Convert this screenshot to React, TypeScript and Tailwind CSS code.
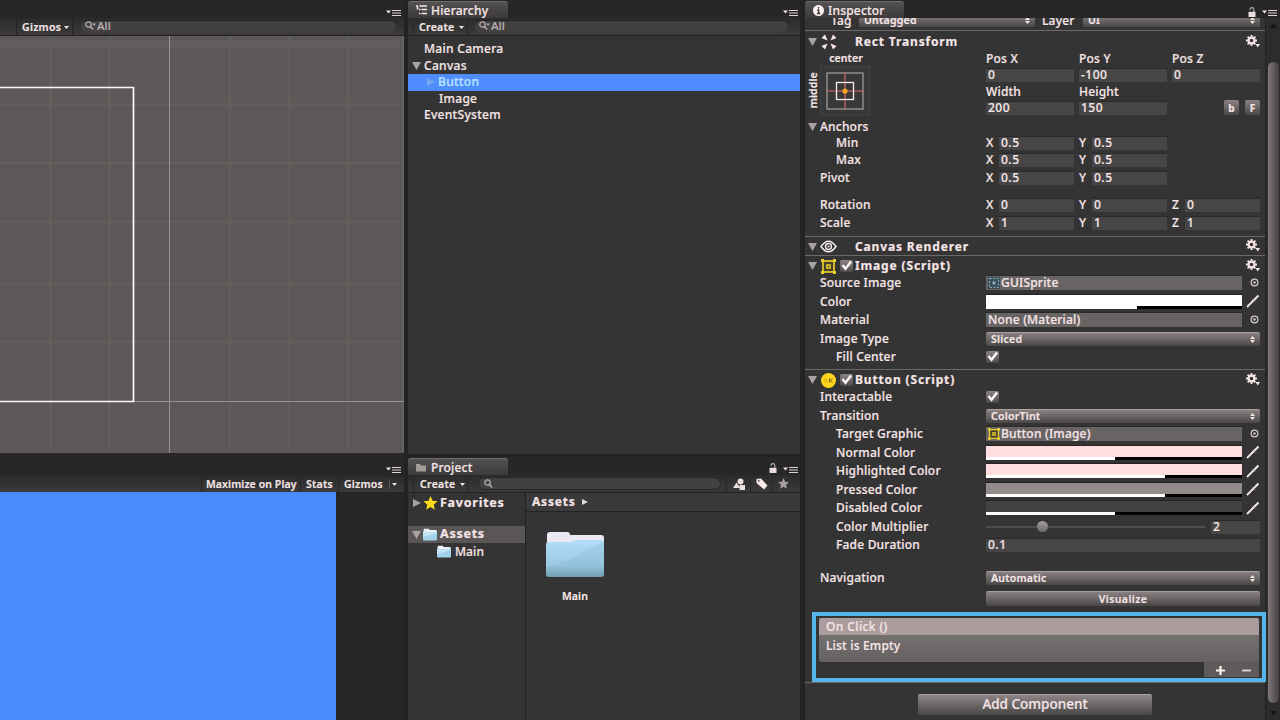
import type { ReactNode } from "react";

function MenuIcon() {
  return (
    <svg width="15" height="8" viewBox="0 0 15 8" className="shrink-0">
      <path d="M0 1.500h5L2.500 4.500z" fill="#f4e6e6" />
      <path d="M6 1.500h9M6 4h9M6 6.500h9" stroke="#e2d3d3" strokeWidth="1.200" />
    </svg>
  );
}

function LockIcon() {
  return (
    <svg width="8" height="10" viewBox="0 0 8 10" className="shrink-0">
      <path d="M2 3V2.500a1.800 1.800 0 0 1 3.800 0V5" fill="none" stroke="#b9adad" strokeWidth="1.100" />
      <path d="M0.500 4.800h7V10h-7z" fill="#eadcdc" />
    </svg>
  );
}

function SearchIcon({ arrow = false }: { arrow?: boolean }) {
  return (
    <svg width="12" height="10" viewBox="0 0 12 10" className="shrink-0">
      <circle cx="3.500" cy="3.500" r="2.700" fill="none" stroke="#b5aaaa" strokeWidth="1.300" />
      <path d="M5.500 5.500L8 8.500" stroke="#b5aaaa" strokeWidth="1.600" />
      {arrow && <path d="M7 2.500h4L9 5z" fill="#b5aaaa" />}
    </svg>
  );
}

function Down() {
  return (
    <svg width="5" height="3" viewBox="0 0 5 3" className="shrink-0">
      <path d="M0 0h5L2.500 3z" fill="#f4e6e6" />
    </svg>
  );
}

function Fold({ closed = false, color = "#a9a2a2" }: { closed?: boolean; color?: string }) {
  return (
    <svg width="9" height="8" viewBox="0 0 9 8" className="shrink-0">
      <path d={closed ? "M1 0L9 4L1 8z" : "M0 0h9L4.500 8z"} fill={color} />
    </svg>
  );
}

function GearIcon() {
  return (
    <svg width="14" height="13" viewBox="0 0 14 13" className="shrink-0">
      <path
        d="M5.500 0V11M0 5.500H11M1.600 1.600L9.400 9.400M9.400 1.600L1.600 9.400"
        stroke="#f6e4e6"
        strokeWidth="1.900"
      />
      <circle cx="5.500" cy="5.500" r="2.900" fill="#353434" stroke="#f6e4e6" strokeWidth="2.200" />
      <path d="M9.500 9h4.500l-2.200 3.500z" fill="#f6e4e6" />
    </svg>
  );
}

function PickerIcon() {
  return (
    <svg width="9" height="9" viewBox="0 0 9 9" className="shrink-0">
      <circle cx="4.500" cy="4.500" r="3.400" fill="none" stroke="#d9cccc" strokeWidth="1.200" />
      <circle cx="4.500" cy="4.500" r="1.200" fill="#d9cccc" />
    </svg>
  );
}

function DropperIcon() {
  return (
    <svg width="14" height="14" viewBox="0 0 14 14" className="shrink-0">
      <path d="M1 13L7.500 6.500" stroke="#f3e9e9" strokeWidth="1.800" />
      <path d="M7 7L12.500 1.500" stroke="#f3e9e9" strokeWidth="2" />
      <path d="M6.500 5L9 7.500" stroke="#b4aaaa" strokeWidth="1" />
    </svg>
  );
}

function FolderIcon() {
  return (
    <svg width="14" height="13" viewBox="0 0 14 13" className="shrink-0">
      <path d="M0.500 3V2q0-1.200 1-1.200h4q1 0 1 1.200h6.500q0.700 0 0.700 1v4H0.500z" fill="#e9f1f6" />
      <path d="M0 4h14v7.500q0 1-1 1H1q-1 0-1-1z" fill="#a3d3ec" />
      <path d="M0 9l14-4v-1H0z" fill="#c0e4f6" />
    </svg>
  );
}

function BigFolderIcon() {
  return (
    <svg width="58" height="46" viewBox="0 0 58 46">
      <defs>
        <linearGradient id="folder" x1="0" y1="0" x2="0" y2="1">
          <stop offset="0" stopColor="#b3ddf8" />
          <stop offset="0.700" stopColor="#9bc8e0" />
          <stop offset="1" stopColor="#6f98aa" />
        </linearGradient>
      </defs>
      <path d="M1 20V4q0-3 3-3h17q3 0 3 3h31q3 0 3 3v14z" fill="#ece9f4" />
      <path d="M0 13q0-2 2-2h23l5-2h26q2 0 2 2v32q0 3-3 3H3q-3 0-3-3z" fill="url(#folder)" />
      <path d="M0 36Q20 33 42 18l16-7v32q0 3-3 3H3q-3 0-3-3z" fill="#7fb0cb" opacity="0.250" />
    </svg>
  );
}

function SpriteIcon({ color, size = 15 }: { color: string; size?: number }) {
  return (
    <svg width={size} height={size} viewBox="0 0 15 15" className="shrink-0">
      <rect x="2" y="2" width="11" height="11" fill="#45412b" stroke={color} strokeWidth="1.700" />
      <path d="M0 0h3v3H0zM12 0H15v3h-3zM0 12h3V15H0zM12 12H15V15h-3z" fill={color} />
      <rect x="5.200" y="5.200" width="4.600" height="4.600" fill={color} />
      <rect x="6.800" y="6.800" width="1.500" height="1.500" fill="#333" />
    </svg>
  );
}

function SmallSpriteIcon() {
  return (
    <svg width="12" height="12" viewBox="0 0 12 12" className="shrink-0">
      <rect width="12" height="12" fill="#3f4d55" />
      <rect x="1.500" y="1.500" width="9" height="9" fill="none" stroke="#7fb2c9" strokeDasharray="2 1.500" />
      <rect x="4.500" y="4.500" width="3" height="3" fill="#7fb2c9" />
    </svg>
  );
}

function Check() {
  return (
    <span className="flex h-[12px] w-[13px] shrink-0 items-center justify-center rounded-[2px] bg-linear-to-b from-[#8d8484] to-[#4d4949]">
      <svg width="13" height="12" viewBox="0 0 13 12">
        <path d="M2.500 5L5.500 8.800L11 1.500" fill="none" stroke="#fff6f6" strokeWidth="2.400" />
      </svg>
    </span>
  );
}

function Tab({ icon, title, className }: { icon: ReactNode; title: string; className: string }) {
  return (
    <div
      className={`flex items-center rounded-t-[3px] border-t border-[#716c6c] bg-linear-to-b from-[#545151] to-[#3c3a3a] ${className}`}
    >
      {icon}
      <span className="text-[12px] tracking-[0.2px]">{title}</span>
    </div>
  );
}

function Field({ value, className = "" }: { value: string; className?: string }) {
  return (
    <div
      className={`flex h-[14px] items-center border-t border-[#2a2a2a] bg-[#474646] pb-[1px] pl-[2px] tracking-[0.5px] ${className}`}
    >
      {value}
    </div>
  );
}

function Dropdown({ value, className = "" }: { value: string; className?: string }) {
  return (
    <div
      className={`flex h-[14px] items-center justify-between rounded-[2px] border-t border-[#aaa0a0] bg-linear-to-b from-[#8a8181] to-[#4a4747] pr-[5px] pl-[5px] text-[10.5px] font-semibold tracking-[0.25px] ${className}`}
    >
      {value}
      <svg width="5" height="7" viewBox="0 0 5 7">
        <path d="M0 3L2.500 0L5 3zM0 4h5L2.500 7z" fill="#f6e6e6" />
      </svg>
    </div>
  );
}

function LabelCell({ indent = false, children }: { indent?: boolean; children: ReactNode }) {
  return <span className={indent ? "w-[181px] pl-[31px]" : "w-[181px] pl-[15px]"}>{children}</span>;
}

function Row({ label, indent = false, children }: { label: string; indent?: boolean; children?: ReactNode }) {
  return (
    <div className="flex h-[18.5px] shrink-0 items-center">
      <LabelCell indent={indent}>{label}</LabelCell>
      {children}
    </div>
  );
}

function ColorBar({ color, alpha }: { color: string; alpha: number }) {
  return (
    <>
      <div className="mb-[1px] h-[15px] w-[256px] border-t border-[#222]">
        <div className="h-[11px]" style={{ backgroundColor: color }} />
        <div className="h-[3px] bg-black">
          <div className="h-full bg-white" style={{ width: alpha }} />
        </div>
      </div>
      <div className="mb-[1px] ml-[4px] flex">
        <DropperIcon />
      </div>
    </>
  );
}

function ObjectField({ value, icon }: { value: string; icon?: ReactNode }) {
  return (
    <>
      <div className="mb-[1px] flex h-[15px] w-[256px] items-center gap-[1px] border-t border-[#2a2a2a] bg-[#696464] pl-[2px]">
        {icon}
        {value}
      </div>
      <div className="mb-[1px] ml-[8px] flex">
        <PickerIcon />
      </div>
    </>
  );
}

function ComponentHeader({
  title,
  icon,
  checked = false,
  className,
}: {
  title: string;
  icon: ReactNode;
  checked?: boolean;
  className: string;
}) {
  return (
    <div className={`flex shrink-0 items-center pl-[3px] ${className}`}>
      <Fold />
      <span className="ml-[3px] flex w-[17px] justify-center">{icon}</span>
      <span className="ml-[3px] flex w-[15px]">{checked && <Check />}</span>
      <span className="grow text-[12px] font-bold tracking-[0.85px]">{title}</span>
      <span className="mr-[5px] mb-[2px]">
        <GearIcon />
      </span>
    </div>
  );
}

function Vector({ label, values, className }: { label: ReactNode; values: string[]; className: string }) {
  return (
    <div className={`flex shrink-0 items-center ${className}`}>
      {label}
      {values.map((value, i) => (
        <div key={i} className="flex w-[93px] items-center">
          <span className="w-[13px]">{"XYZ"[i]}</span>
          <Field value={value} className="w-[75px]" />
        </div>
      ))}
    </div>
  );
}

function SceneView() {
  return (
    <div className="flex h-[453px] flex-col">
      <div className="flex h-[18px] justify-end bg-[#272727] pt-[9px] pr-[3px]">
        <MenuIcon />
      </div>
      <div className="flex h-[18px] items-center border-b border-[#222] bg-linear-to-b from-[#2b2b2b] to-[#3b3a3a]">
        <div className="ml-[16px] flex h-full w-[57px] items-center justify-between border-x border-[#252525] pt-[1px] pr-[3px] pl-[5px] text-[10.5px] font-semibold tracking-[0.3px]">
          Gizmos <Down />
        </div>
        <div className="ml-[8px] flex h-[13px] w-[315px] items-center rounded-full border-t border-[#242424] bg-[#424141] pb-[2px] pl-[4px] text-[11.5px] text-[#b9aeae]">
          <SearchIcon arrow /> All
        </div>
      </div>
      <svg width="404" height="417" viewBox="0 36 404 417" className="bg-[#5d5857]">
        <g stroke="#62605e" strokeWidth="2.500">
          <path d="M50.500 36V448M109.500 36V448M230 36V448M289.500 36V448M348.500 36V448" />
          <path d="M0 105H400M0 163H400M0 222H400M0 284H400M0 342H400" />
        </g>
        <path d="M0 44H400" stroke="#625e5d" strokeWidth="7" />
        <path d="M403 36V453" stroke="#686363" strokeWidth="2" />
        <path d="M169.500 36V453M0 401.500H404" stroke="#989292" />
        <path d="M-2 87.500H133.500V401.500H-2" fill="none" stroke="#fff8f8" strokeWidth="1.700" />
      </svg>
    </div>
  );
}

function GameView() {
  return (
    <div className="flex grow flex-col">
      <div className="flex h-[23px] justify-end bg-[#272727] pt-[13px] pr-[3px]">
        <MenuIcon />
      </div>
      <div className="flex h-[16px] items-center justify-end bg-linear-to-b from-[#2b2b2b] to-[#3b3a3a] text-[10.5px] font-semibold tracking-[0.25px]">
        <span className="flex h-full w-[99px] items-center border-l border-[#252525] pl-[4px] tracking-[0.1px] whitespace-nowrap">
          Maximize on Play
        </span>
        <span className="flex h-full w-[38px] items-center border-l border-[#252525] pl-[5px]">Stats</span>
        <span className="flex h-full w-[60px] items-center border-l border-[#252525] pl-[5px]">
          Gizmos
          <span className="ml-[6px] flex h-[10px] items-center border-l border-[#595454] pl-[2px]">
            <Down />
          </span>
        </span>
        <span className="w-[6px]" />
      </div>
      <div className="grow bg-[#262626]">
        <div className="h-[228px] w-[336px] bg-[#498bff]" />
      </div>
    </div>
  );
}

function Hierarchy() {
  return (
    <div className="flex h-[454px] flex-col">
      <div className="flex h-[18px] items-end justify-between bg-[#272727]">
        <Tab
          className="h-[17px] w-[100px] gap-[4px] pt-[2px] pl-[8px]"
          title="Hierarchy"
          icon={
            <svg width="11" height="10" viewBox="0 0 11 10" className="mb-[2px]">
              <path
                d="M0 1h2M3.500 1H11M3 4.500h1.500M5.500 4.500H11M3 8.500h1.500M5.500 8.500H11M1.500 1v3.500"
                fill="none"
                stroke="#f6e6e6"
                strokeWidth="1.500"
              />
            </svg>
          }
        />
        <span className="mr-[2px] mb-[1px]">
          <MenuIcon />
        </span>
      </div>
      <div className="flex h-[18px] shrink-0 items-center border-b border-[#222] bg-linear-to-b from-[#2b2b2b] to-[#3b3a3a]">
        <div className="ml-[5px] flex h-full w-[55px] items-center justify-between border-x border-[#272727] pt-[1px] pr-[3px] pl-[5px] text-[10.5px] font-semibold tracking-[0.3px]">
          Create <Down />
        </div>
        <div className="ml-[7px] flex h-[13px] w-[313px] items-center rounded-full border-t border-[#242424] bg-[#424141] pb-[2px] pl-[4px] text-[11.5px] text-[#b9aeae]">
          <SearchIcon arrow /> All
        </div>
      </div>
      <div className="flex grow flex-col bg-[#353434] pt-[5px] tracking-[0.3px]">
        <div className="flex h-[16.5px] items-center pl-[16px]">Main Camera</div>
        <div className="flex h-[16.5px] items-center gap-[3px] pl-[4px]">
          <Fold /> Canvas
        </div>
        <div className="flex h-[16.5px] items-center gap-[3px] bg-[#4f8dff] pl-[18px] text-[#b8e4ff]">
          <Fold closed color="#74a9ef" /> Button
        </div>
        <div className="flex h-[16.5px] items-center pl-[31px]">Image</div>
        <div className="flex h-[16.5px] items-center pl-[16px]">EventSystem</div>
      </div>
    </div>
  );
}

function Project() {
  return (
    <div className="flex grow flex-col">
      <div className="flex h-[18px] items-end bg-[#272727]">
        <Tab
          className="mr-auto h-[17px] w-[100px] gap-[5px] pt-[2px] pl-[8px]"
          title="Project"
          icon={
            <svg width="10" height="9" viewBox="0 0 10 9" className="mb-[2px]">
              <path d="M0 1h4l1 1.500h5V8.500H0z" fill="#a49b9b" />
            </svg>
          }
        />
        <span className="mb-[2px]">
          <LockIcon />
        </span>
        <span className="mr-[2px] mb-[1px] ml-[6px]">
          <MenuIcon />
        </span>
      </div>
      <div className="flex h-[18px] shrink-0 items-center border-b border-[#222] bg-linear-to-b from-[#2b2b2b] to-[#3b3a3a]">
        <div className="ml-[5px] flex h-full w-[55px] items-center justify-between border-x border-[#272727] pt-[1px] pr-[2px] pl-[6px] text-[10.5px] font-semibold tracking-[0.3px]">
          Create <Down />
        </div>
        <div className="ml-[10px] flex h-[13px] w-[243px] items-center rounded-full border border-[#272727] bg-[#424141] pl-[5px]">
          <SearchIcon />
        </div>
        <div className="ml-[5px] flex h-full w-[24px] items-center justify-center border-l border-[#272727]">
          <svg width="12" height="12" viewBox="0 0 12 12">
            <circle cx="7.500" cy="3.500" r="3" fill="#f0e1e1" />
            <path d="M0 10L3.500 4.500L7 10zM6.500 7H12v5H6.500z" fill="#f0e1e1" />
          </svg>
        </div>
        <div className="flex h-full w-[22px] items-center justify-center border-l border-[#272727]">
          <svg width="12" height="12" viewBox="0 0 12 12">
            <path d="M0.500 1L5 0.500L11.500 7.500L8 11.500L0.500 5z" fill="#fbe8ea" />
            <circle cx="2.800" cy="2.800" r="0.900" fill="#444" />
          </svg>
        </div>
        <div className="flex h-full w-[21px] items-center justify-center border-l border-[#272727]">
          <svg width="11" height="11" viewBox="0 0 24 24">
            <path
              d="M12 0l3.500 8.200 8.500.8-6.500 5.800 2 8.700-7.500-4.600-7.500 4.600 2-8.700L0 9l8.500-.8z"
              fill="#a89f9f"
            />
          </svg>
        </div>
      </div>
      <div className="flex grow">
        <div className="w-[118px] border-r border-[#222] bg-[#353434]">
          <div className="flex h-[20px] items-center pl-[4px] text-[12.5px] font-bold tracking-[0.75px]">
            <Fold closed />
            <svg width="15" height="14" viewBox="0 0 24 24" className="mr-[2px] ml-[2px]">
              <path
                d="M12 0l3.500 8.200 8.500.8-6.500 5.800 2 8.700-7.500-4.600-7.500 4.600 2-8.700L0 9l8.500-.8z"
                fill="#ffd91c"
              />
            </svg>
            Favorites
          </div>
          <div className="mt-[13px] flex h-[17px] items-center bg-[#5a5656] pl-[4px] text-[12.5px] font-bold tracking-[0.75px]">
            <Fold />
            <span className="mr-[3px] ml-[2px]">
              <FolderIcon />
            </span>
            Assets
          </div>
          <div className="flex h-[17px] items-center gap-[4px] pl-[29px] tracking-[0.1px]">
            <FolderIcon /> Main
          </div>
        </div>
        <div className="flex grow flex-col bg-[#353434]">
          <div className="flex h-[19px] items-center border-b border-[#222] bg-[#3b3a3a] pl-[6px] text-[12px] font-bold tracking-[0.8px]">
            Assets
            <svg width="6" height="6" viewBox="0 0 6 6" className="ml-[6px]">
              <path d="M0 0L6 3L0 6z" fill="#e5d6d6" />
            </svg>
          </div>
          <div className="mt-[19px] ml-[20px] flex w-[58px] flex-col items-center">
            <BigFolderIcon />
            <span className="mt-[14px] text-[10.5px] font-semibold tracking-[0.1px]">Main</span>
          </div>
        </div>
      </div>
    </div>
  );
}

function RectTransform() {
  return (
    <>
      <ComponentHeader
        className="h-[20px]"
        title="Rect Transform"
        icon={
          <svg width="16" height="16" viewBox="0 0 16 16">
            <path
              d="M0.500 4L4 0.500L6.500 6.500zM15.500 4L12 0.500L9.500 6.500zM0.500 12L4 15.500L6.500 9.500zM15.500 12L12 15.500L9.500 9.500z"
              fill="#f8e8e8"
            />
          </svg>
        }
      />
      <div className="flex h-[66px] shrink-0">
        <div className="flex w-[15px] items-center justify-center pt-[10px]">
          <span className="-rotate-90 text-[10.5px] font-semibold tracking-[0.1px]">middle</span>
        </div>
        <div className="flex w-[166px] flex-col">
          <span className="h-[14px] w-[50px] pl-[2px] text-center text-[10.5px] leading-[12px] font-semibold tracking-[0.1px]">
            center
          </span>
          <div className="flex h-[50px] w-[50px] items-center justify-center border border-[#424141] bg-[#393838]">
            <svg width="38" height="38" viewBox="0 0 38 38">
              <rect x="1" y="1" width="36" height="36" fill="none" stroke="#a9a1a1" strokeWidth="1.200" />
              <path d="M19 1V37M1 19H37" stroke="#d96a6a" strokeWidth="1.200" />
              <rect x="10.500" y="10.500" width="17" height="17" fill="none" stroke="#f6eaea" strokeWidth="1.300" />
              <circle cx="19" cy="19" r="2.600" fill="#f5a31c" />
            </svg>
          </div>
        </div>
        <div className="flex w-[93px] flex-col">
          <span className="h-[16px] leading-[14px]">Pos X</span>
          <Field value="0" className="w-[88px]" />
          <span className="h-[19px] leading-[19px]">Width</span>
          <Field value="200" className="w-[88px]" />
        </div>
        <div className="flex w-[93px] flex-col">
          <span className="h-[16px] leading-[14px]">Pos Y</span>
          <Field value="-100" className="w-[88px]" />
          <span className="h-[19px] leading-[19px]">Height</span>
          <Field value="150" className="w-[88px]" />
        </div>
        <div className="flex w-[88px] flex-col">
          <span className="h-[16px] leading-[14px]">Pos Z</span>
          <Field value="0" className="w-[88px]" />
          <div className="mt-[18px] flex justify-end gap-[6px] text-[10px] font-bold">
            <span className="flex h-[15px] w-[15px] items-center justify-center rounded-[2px] bg-linear-to-b from-[#8d8484] to-[#4a4747]">
              b
            </span>
            <span className="flex h-[15px] w-[15px] items-center justify-center rounded-[2px] bg-linear-to-b from-[#8d8484] to-[#4a4747]">
              F
            </span>
          </div>
        </div>
      </div>
      <div className="flex h-[17px] shrink-0 items-center gap-[3px] pl-[3px]">
        <Fold /> Anchors
      </div>
      <Vector className="h-[16px]" label={<LabelCell indent>Min</LabelCell>} values={["0.5", "0.5"]} />
      <Vector className="h-[17px]" label={<LabelCell indent>Max</LabelCell>} values={["0.5", "0.5"]} />
      <Vector className="h-[19px]" label={<LabelCell>Pivot</LabelCell>} values={["0.5", "0.5"]} />
      <Vector className="mt-[8px] h-[19px]" label={<LabelCell>Rotation</LabelCell>} values={["0", "0", "0"]} />
      <Vector className="mb-[4px] h-[18px]" label={<LabelCell>Scale</LabelCell>} values={["1", "1", "1"]} />
    </>
  );
}

function Inspector() {
  return (
    <div className="flex w-[475px] flex-col bg-[#353434]">
      <div className="flex h-[18px] shrink-0 items-end bg-[#272727]">
        <Tab
          className="mr-auto h-[17px] w-[99px] gap-[4px] pt-[2px] pl-[8px]"
          title="Inspector"
          icon={
            <svg width="11" height="11" viewBox="0 0 11 11" className="mb-[2px]">
              <circle cx="5.500" cy="5.500" r="5.500" fill="#fff2f2" />
              <path d="M5.500 2v1.600M4.200 5h1.500v3.500M4 8.500h3.200" fill="none" stroke="#333" strokeWidth="1.300" />
            </svg>
          }
        />
        <span className="mb-[1px]">
          <LockIcon />
        </span>
        <span className="mr-[3px] mb-[1px] ml-[6px]">
          <MenuIcon />
        </span>
      </div>
      <div className="flex h-[702px]">
        <div className="flex w-[461px] flex-col border-r border-[#222] tracking-[0.2px]">
          {/* Scrolled under the tab bar */}
          <div className="flex h-[13px] shrink-0 items-end overflow-hidden border-b border-[#6d6868] pb-[3px]">
            <span className="ml-[26px] w-[28px]">Tag</span>
            <Dropdown value="Untagged" className="w-[176px]" />
            <span className="ml-[7px] w-[41px]">Layer</span>
            <Dropdown value="UI" className="w-[177px]" />
          </div>
          <div className="h-[1px] shrink-0" />
          <RectTransform />

          <div className="h-[1px] shrink-0 bg-[#6d6868]" />
          <ComponentHeader
            className="h-[18px] pt-[1px]"
            title="Canvas Renderer"
            icon={
              <svg width="17" height="13" viewBox="0 0 17 13" className="shrink-0">
                <path d="M1 6.500Q8.500-4 16 6.500Q8.500 17 1 6.500z" fill="none" stroke="#f6eaea" strokeWidth="1.500" />
                <circle cx="8.500" cy="6.500" r="3" fill="none" stroke="#f6eaea" strokeWidth="1.400" />
                <circle cx="8.500" cy="6.500" r="1" fill="#f6eaea" />
              </svg>
            }
          />

          <div className="h-[1px] shrink-0 bg-[#6d6868]" />
          <ComponentHeader
            className="h-[18px] pt-[2px]"
            title="Image (Script)"
            checked
            icon={<SpriteIcon color="#e8cf2c" />}
          />
          <Row label="Source Image">
            <ObjectField value="GUISprite" icon={<SmallSpriteIcon />} />
          </Row>
          <Row label="Color">
            <ColorBar color="#ffffff" alpha={151} />
          </Row>
          <Row label="Material">
            <ObjectField value="None (Material)" />
          </Row>
          <Row label="Image Type">
            <Dropdown value="Sliced" className="w-[274px]" />
          </Row>
          <Row label="Fill Center" indent>
            <Check />
          </Row>

          <div className="mt-[2.5px] h-[1px] shrink-0 bg-[#6d6868]" />
          <ComponentHeader
            className="h-[18px] pt-[2px]"
            title="Button (Script)"
            checked
            icon={
              <svg width="15" height="15" viewBox="0 0 15 15" className="shrink-0">
                <circle cx="7.500" cy="7.500" r="7.500" fill="#ffd51d" />
                <circle cx="4.500" cy="7.500" r="1.600" fill="none" stroke="#cda613" strokeWidth="0.900" />
                <path d="M8.500 5.500v4M11.500 5.500L9 7.500l2.500 2" fill="none" stroke="#7d6510" strokeWidth="1" />
              </svg>
            }
          />
          <Row label="Interactable">
            <Check />
          </Row>
          <Row label="Transition">
            <Dropdown value="ColorTint" className="w-[274px]" />
          </Row>
          <Row label="Target Graphic" indent>
            <ObjectField value="Button (Image)" icon={<SpriteIcon color="#e8cf2c" size={12} />} />
          </Row>
          <Row label="Normal Color" indent>
            <ColorBar color="#ffdedf" alpha={129} />
          </Row>
          <Row label="Highlighted Color" indent>
            <ColorBar color="#ffdedf" alpha={179} />
          </Row>
          <Row label="Pressed Color" indent>
            <ColorBar color="#938a8a" alpha={179} />
          </Row>
          <Row label="Disabled Color" indent>
            <ColorBar color="#434242" alpha={129} />
          </Row>
          <Row label="Color Multiplier" indent>
            <div className="flex w-[219px] items-center">
              <div className="h-[2px] w-[51px] bg-[#4f4c4c]" />
              <div className="h-[11px] w-[11px] rounded-full bg-linear-to-b from-[#a89f9f] to-[#6d6767]" />
              <div className="h-[2px] grow bg-[#4f4c4c]" />
            </div>
            <Field value="2" className="ml-[6px] w-[49px]" />
          </Row>
          <Row label="Fade Duration" indent>
            <Field value="0.1" className="w-[274px]" />
          </Row>
          <div className="h-[14px] shrink-0" />
          <Row label="Navigation">
            <Dropdown value="Automatic" className="w-[274px]" />
          </Row>
          <div className="mt-[4px] ml-[181px] flex h-[15px] w-[274px] shrink-0 items-center justify-center rounded-[2px] border-t border-[#aaa0a0] bg-linear-to-b from-[#8a8181] to-[#4a4747] text-[10.5px] font-semibold tracking-[0.4px]">
            Visualize
          </div>

          <div className="mt-[6px] border-b border-[#6d6868] pl-[7px]">
            <div className="-mr-[1px] h-[70px] border-4 border-[#55b4ea] px-[3px] pt-[2px]">
              <div className="h-[17px] rounded-t-[2px] bg-[#ab9d9e] pl-[7px] leading-[17px] tracking-[0.4px]">
                On Click ()
              </div>
              <div className="h-[27px] rounded-bl-[2px] bg-linear-to-b from-[#757070] to-[#676262] pt-[2px] pl-[7px] leading-[18px]">
                List is Empty
              </div>
              <div className="ml-auto flex h-[15px] w-[55px] items-center justify-around bg-[#5f5b5b]">
                <svg width="9" height="9" viewBox="0 0 9 9" className="mt-[1px] ml-[3px]">
                  <path d="M4.500 0V9M0 4.500H9" stroke="#fff4f4" strokeWidth="2.200" />
                </svg>
                <svg width="9" height="9" viewBox="0 0 9 9" className="mt-[1px]">
                  <path d="M0 4.500H9" stroke="#e7d9d9" strokeWidth="1.800" />
                </svg>
              </div>
            </div>
          </div>

          <div className="mt-[11px] ml-[113px] flex h-[21px] w-[234px] shrink-0 items-center justify-center rounded-[2px] border-t border-[#aaa0a0] bg-linear-to-b from-[#8f8686] to-[#4a4747] text-[13.5px] tracking-normal">
            Add Component
          </div>
        </div>

        {/* Scrollbar */}
        <div className="flex w-[14px] flex-col items-center bg-[#2d2c2c] pt-[5px]">
          <svg width="7" height="5" viewBox="0 0 7 5">
            <path d="M0 5h7L3.500 0z" fill="#151515" />
          </svg>
          <div className="mt-[34px] h-[641px] w-[11px] rounded-full bg-linear-to-r from-[#817878] to-[#454242]" />
          <svg width="7" height="5" viewBox="0 0 7 5" className="mt-[8px]">
            <path d="M0 0h7L3.500 5z" fill="#151515" />
          </svg>
        </div>
      </div>
    </div>
  );
}

export default function App() {
  return (
    <div className="flex h-[720px] w-[1280px] overflow-hidden bg-[#232323] font-['Noto_Sans','DejaVu_Sans',sans-serif] text-[12px] leading-none font-medium text-[#f5e5e6] [-webkit-text-stroke:0.2px]">
      <div className="mr-[4px] flex w-[404px] flex-col">
        <SceneView />
        <GameView />
      </div>
      <div className="mr-[5px] flex w-[392px] flex-col gap-[3px]">
        <Hierarchy />
        <Project />
      </div>
      <Inspector />
    </div>
  );
}
